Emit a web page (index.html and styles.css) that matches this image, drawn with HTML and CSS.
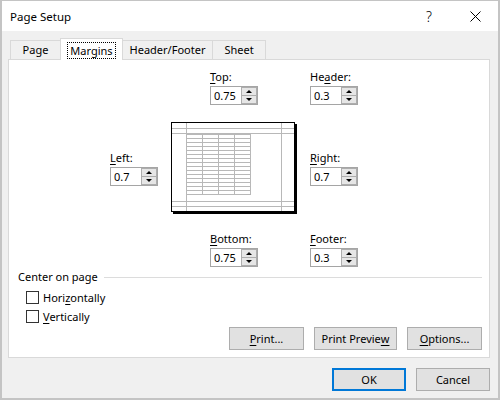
FILE: index.html
```html
<!DOCTYPE html>
<html>
<head>
<meta charset="utf-8">
<link rel="stylesheet" href="styles.css">
</head>
<body>
<div class="window">
  <div class="titlebar">
    <span class="title">Page Setup</span>
    <span class="cap-btn help">?</span>
    <span class="cap-btn close">
      <svg width="11" height="11" viewBox="0 0 11 11"><path d="M0.5 0.5 L10.5 10.5 M10.5 0.5 L0.5 10.5" stroke="#000" stroke-width="1" fill="none"/></svg>
    </span>
  </div>
  <div class="body">
    <div class="tabs">
      <div class="tab first tab-page">Page</div>
      <div class="tab active tab-margins"><span class="focus">Margins</span></div>
      <div class="tab tab-hf">Header/Footer</div>
      <div class="tab tab-sheet">Sheet</div>
    </div>
    <div class="panel">
      <div class="mgrid">
        <div class="field f-top">
          <div class="lbl"><u>T</u>op:</div>
          <div class="spin"><span class="val">0.75</span><span class="arrows"><span class="ab up"></span><span class="ab dn"></span></span></div>
        </div>
        <div class="field f-header">
          <div class="lbl">He<u>a</u>der:</div>
          <div class="spin"><span class="val">0.3</span><span class="arrows"><span class="ab up"></span><span class="ab dn"></span></span></div>
        </div>
        <div class="field f-left">
          <div class="lbl"><u>L</u>eft:</div>
          <div class="spin"><span class="val">0.7</span><span class="arrows"><span class="ab up"></span><span class="ab dn"></span></span></div>
        </div>
        <div class="preview">
          <svg width="127" height="92" viewBox="0 0 127 92" shape-rendering="crispEdges">
            <rect x="0" y="0" width="124" height="90" fill="#fff"/>
            <g stroke="#b8b8b8" stroke-width="1" fill="none">
              <path d="M15.5 1 V89 M110.5 1 V89"/>
              <path d="M1 6.5 H123 M1 11.5 H123 M1 79.5 H123 M1 84.5 H123"/>
              <path d="M31.5 12 V72 M47.5 12 V72 M63.5 12 V72 M79.5 12 V72"/>
              <path d="M15 12.5 H80 M15 16.5 H80 M15 20.5 H80 M15 24.5 H80 M15 28.5 H80 M15 32.5 H80 M15 36.5 H80 M15 40.5 H80 M15 44.5 H80 M15 48.5 H80 M15 52.5 H80 M15 56.5 H80 M15 60.5 H80 M15 64.5 H80 M15 68.5 H80 M15 72.5 H80"/>
            </g>
            <rect x="0.5" y="0.5" width="123" height="89" fill="none" stroke="#000" stroke-width="1"/>
            <rect x="124" y="2" width="2" height="90" fill="#000"/>
            <rect x="2" y="90" width="124" height="2" fill="#000"/>
          </svg>
        </div>
        <div class="field f-right">
          <div class="lbl"><u>R</u>ight:</div>
          <div class="spin"><span class="val">0.7</span><span class="arrows"><span class="ab up"></span><span class="ab dn"></span></span></div>
        </div>
        <div class="field f-bottom">
          <div class="lbl"><u>B</u>ottom:</div>
          <div class="spin"><span class="val">0.75</span><span class="arrows"><span class="ab up"></span><span class="ab dn"></span></span></div>
        </div>
        <div class="field f-footer">
          <div class="lbl"><u>F</u>ooter:</div>
          <div class="spin"><span class="val">0.3</span><span class="arrows"><span class="ab up"></span><span class="ab dn"></span></span></div>
        </div>
      </div>
      <div class="group-head"><span class="group-title">Center on page</span><span class="rule"></span></div>
      <div class="checks">
        <div class="check"><span class="box"></span><span>Hori<u>z</u>ontally</span></div>
        <div class="check"><span class="box"></span><span><u>V</u>ertically</span></div>
      </div>
      <div class="panel-buttons">
        <span class="btn w75"><u>P</u>rint...</span>
        <span class="btn w83">Print Previe<u>w</u></span>
        <span class="btn w75"><u>O</u>ptions...</span>
      </div>
    </div>
    <div class="footer">
      <span class="btn w74 default">OK</span>
      <span class="btn w74">Cancel</span>
    </div>
  </div>
</div>
</body>
</html>
```

FILE: styles.css
```css
html, body {
  margin: 0;
  padding: 0;
}

.window {
  width: 500px;
  height: 400px;
  box-sizing: border-box;
  border: 2px solid #c4c4c4;
  border-top-width: 1px;
  background: #f0f0f0;
  font-family: "Noto Sans", "Open Sans", sans-serif;
  font-size: 11px;
  color: #000;
  overflow: hidden;
}

u {
  text-decoration: underline;
  text-underline-offset: 2px;
}

.titlebar {
  height: 30px;
  background: #fff;
  display: flex;
  align-items: center;
  padding-left: 8px;
}

.title {
  flex: 1;
  font-size: 11.5px;
}

.cap-btn {
  width: 46px;
  height: 30px;
  display: flex;
  align-items: center;
  justify-content: center;
}

.help {
  font-size: 14px;
  font-weight: 300;
}

.body {
  padding: 0 8px 0 6px;
}

.tabs {
  display: flex;
  align-items: flex-end;
  height: 28px;
  padding-left: 2px;
  box-sizing: border-box;
}

.tab {
  box-sizing: border-box;
  height: 19px;
  border-top: 1px solid #d9d9d9;
  border-right: 1px solid #d9d9d9;
  background: #f0f0f0;
  text-align: center;
  line-height: 18px;
}

.tab.first {
  border-left: 1px solid #d9d9d9;
}

.tab-page { width: 51px; }
.tab-margins { width: 63px; }
.tab-hf { width: 90px; }
.tab-sheet { width: 53px; }

.tab.active {
  height: 22px;
  margin-bottom: -1px;
  margin-left: -1px;
  border-left: 1px solid #d9d9d9;
  background: #fff;
  position: relative;
  z-index: 1;
  line-height: 17px;
  padding-top: 3px;
}

.focus {
  display: inline-block;
  outline: 1px dotted #000;
  line-height: 15px;
  padding: 0 2px;
}

.panel {
  background: #fff;
  border: 1px solid #d9d9d9;
  height: 299px;
  box-sizing: border-box;
  padding: 0 7px 0 9px;
}

.mgrid {
  display: grid;
  grid-template-columns: 48px 13px 39px 48px 39px 13px 48px;
  grid-template-rows: auto auto auto;
  row-gap: 17px;
  margin-top: 9px;
  margin-left: 92px;
}

.field {
  display: flex;
  flex-direction: column;
}

.lbl {
  line-height: 16px;
  height: 16px;
  margin-bottom: 1px;
}

.f-top { grid-column: 4; grid-row: 1; }
.f-header { grid-column: 7; grid-row: 1; }
.f-left { grid-column: 1; grid-row: 2; align-self: center; }
.preview { grid-column: 3 / 6; grid-row: 2; line-height: 0; }
.f-right { grid-column: 7; grid-row: 2; align-self: center; }
.f-bottom { grid-column: 4; grid-row: 3; }
.f-footer { grid-column: 7; grid-row: 3; }

.spin {
  display: flex;
  width: 48px;
  height: 19px;
  box-sizing: border-box;
  border: 1px solid #a5a5a5;
  background: #fff;
}

.val {
  flex: 1;
  padding-left: 3px;
  line-height: 17px;
}

.arrows {
  display: flex;
  flex-direction: column;
  width: 16px;
}

.ab {
  flex: 1;
  box-sizing: border-box;
  background: #e6e6e6;
  border: 1px solid #adadad;
  display: flex;
  align-items: center;
  justify-content: center;
}

.ab.dn {
  border-top: none;
}

.ab.up::after {
  content: "";
  width: 0;
  height: 0;
  border-left: 3px solid transparent;
  border-right: 3px solid transparent;
  border-bottom: 3px solid #000;
}

.ab.dn::after {
  content: "";
  width: 0;
  height: 0;
  border-left: 3px solid transparent;
  border-right: 3px solid transparent;
  border-top: 3px solid #000;
}

.group-head {
  display: flex;
  align-items: center;
  margin-top: 2px;
  line-height: 16px;
}

.group-title {
  padding-right: 6px;
}

.rule {
  flex: 1;
  height: 1px;
  background: #dcdcdc;
}

.checks {
  margin-top: 3px;
  padding-left: 8px;
}

.check {
  display: flex;
  align-items: center;
  height: 19px;
}

.box {
  width: 13px;
  height: 13px;
  box-sizing: border-box;
  border: 1px solid #333;
  background: #fff;
  margin-right: 4px;
}

.panel-buttons {
  display: flex;
  justify-content: flex-end;
  gap: 10px;
  margin-top: 1px;
}

.btn {
  box-sizing: border-box;
  height: 23px;
  border: 1px solid #adadad;
  background: #e1e1e1;
  display: flex;
  align-items: center;
  justify-content: center;
}

.w75 { width: 75px; }
.w83 { width: 83px; }
.w74 { width: 74px; }

.btn.default {
  border: 2px solid #0078d7;
}

.footer {
  display: flex;
  justify-content: flex-end;
  gap: 10px;
  margin-top: 10px;
}
```
